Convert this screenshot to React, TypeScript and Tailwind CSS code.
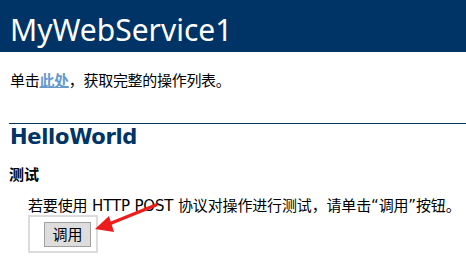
import React from "react";

export default function App() {
  return (
    <div className="relative w-[466px] h-[271px] bg-white overflow-hidden text-black font-['DejaVu_Sans','Noto_Sans_CJK_SC',sans-serif]">
      <div className="h-[52px] bg-[#003366] pl-[10px] pt-[10px]">
        <h1 className="text-[30px] leading-[40px] font-normal text-white font-['Noto_Sans','Noto_Sans_CJK_SC',sans-serif]">
          MyWebService1
        </h1>
      </div>

      <p className="mt-[18px] pl-[10px] text-[15px] leading-[22px] tracking-[-0.3px]">
        单击
        <a className="font-bold underline text-[#6699cc]">此处</a>
        ，获取完整的操作列表。
      </p>

      <h2 className="mt-[31px] ml-[9px] border-t border-[#003366] pl-px pt-px text-[21px] leading-[24px] font-bold tracking-[-0.3px] text-[#003366]">
        HelloWorld
      </h2>

      <h3 className="mt-[15px] pl-[9px] text-[15px] leading-[22px] font-bold">测试</h3>

      <div className="mt-[11px] pl-[28px]">
        <p className="text-[15px] leading-[18px] whitespace-nowrap tracking-[-0.15px]">
          若要使用 HTTP POST 协议对操作进行测试，请单击“调用”按钮。
        </p>
        <div className="flex justify-end w-[70px] h-[38px] border-2 border-[#dcdcdc] pt-[5px] pr-[5px] pb-[4px]">
          <button className="w-[47px] h-[25px] bg-[#dddddd] border border-[#a0a0a0] text-[15px] leading-[22px] flex items-center justify-center">
            调用
          </button>
        </div>
      </div>

      <svg className="absolute left-0 top-0" width="466" height="271" viewBox="0 0 466 271">
        <line x1="156" y1="205" x2="109" y2="224" stroke="#ee1c1c" strokeWidth="3.2" strokeLinecap="round" />
        <polygon points="95,229 109,216 114,232" fill="#ee1c1c" />
      </svg>
    </div>
  );
}
